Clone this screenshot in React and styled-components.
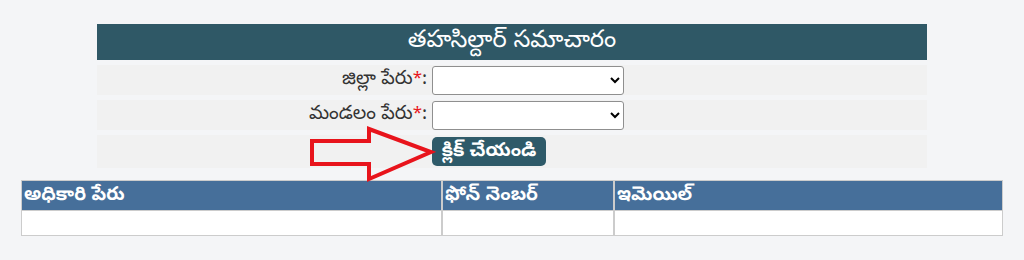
import React from 'react';
import styled, { createGlobalStyle } from 'styled-components';

const GlobalStyle = createGlobalStyle`
	body {
		margin: 0;
		background: #f4f5f7;
		font-family: 'Noto Sans Telugu', 'Noto Sans', 'Liberation Sans', sans-serif;
	}
`;

const Page = styled.div`
	position: relative;
	padding-top: 24px;
	height: 260px;
	box-sizing: border-box;
`;

const Panel = styled.div`
	width: 830px;
	margin: 0 auto;
	display: flex;
	flex-direction: column;
	gap: 5px;
`;

const Title = styled.div`
	height: 36px;
	background: #2f5866;
	color: #fff;
	font-size: 24px;
	display: flex;
	align-items: center;
	justify-content: center;
`;

const Row = styled.div`
	display: grid;
	grid-template-columns: 335px 1fr;
	align-items: center;
	background: #f1f1f1;
	height: ${(p) => p.height || 30}px;
`;

const Label = styled.label`
	text-align: right;
	padding-right: 5px;
	font-size: 19px;
	color: #333;
`;

const Star = styled.span`
	color: #e8141c;
	font-size: 17px;
`;

const Select = styled.select`
	width: 192px;
	height: 29px;
	border: 1px solid #8f8f8f;
	border-radius: 3px;
	background: #fff;
	font-size: 15px;
`;

const Button = styled.button`
	border: none;
	border-radius: 5px;
	background: #2e5a69;
	color: #fff;
	font-family: inherit;
	font-weight: 700;
	font-size: 19px;
	width: 114px;
	height: 29px;
	padding: 0 4px;
	justify-self: start;
	white-space: nowrap;
`;

const Table = styled.table`
	width: 982px;
	margin: 12px auto 0;
	border-collapse: separate;
	border-spacing: 0;
	border: 1px solid #ccc;
	background: #fff;
`;

const Th = styled.th`
	background: #466f9a;
	color: #fff;
	font-size: 19px;
	font-weight: 700;
	text-align: left;
	height: 29px;
	padding: 0 2px;
	width: ${(p) => p.w}px;
	border-right: ${(p) => (p.last ? 'none' : '2px solid #ccc')};
	border-bottom: 1px solid #ccc;
`;

const Td = styled.td`
	height: 22px;
	border-right: ${(p) => (p.last ? 'none' : '2px solid #ccc')};
`;

const Arrow = styled.svg`
	position: absolute;
	left: 308px;
	top: 126px;
`;

const App = () => {
	return (
		<>
			<GlobalStyle />
			<Page>
				<Panel>
					<Title>తహసిల్దార్ సమాచారం</Title>
					<Row>
						<Label>
							జిల్లా పేరు<Star>*</Star>:
						</Label>
						<Select />
					</Row>
					<Row>
						<Label>
							మండలం పేరు<Star>*</Star>:
						</Label>
						<Select />
					</Row>
					<Row height={33}>
						<span />
						<Button>క్లిక్ చేయండి</Button>
					</Row>
				</Panel>
				<Table>
					<thead>
						<tr>
							<Th w={415}>అధికారి పేరు</Th>
							<Th w={166}>ఫోన్ నెంబర్</Th>
							<Th last>ఇమెయిల్</Th>
						</tr>
					</thead>
					<tbody>
						<tr>
							<Td />
							<Td />
							<Td last />
						</tr>
					</tbody>
				</Table>
				<Arrow width="128" height="58" viewBox="0 0 128 58">
					<path
						d="M4 15 L61 15 L61 3 L123 26 L61 53 L61 38 L4 38 Z"
						fill="none"
						stroke="#e8141c"
						strokeWidth="4"
						strokeLinejoin="miter"
					/>
				</Arrow>
			</Page>
		</>
	);
};

export default App;
